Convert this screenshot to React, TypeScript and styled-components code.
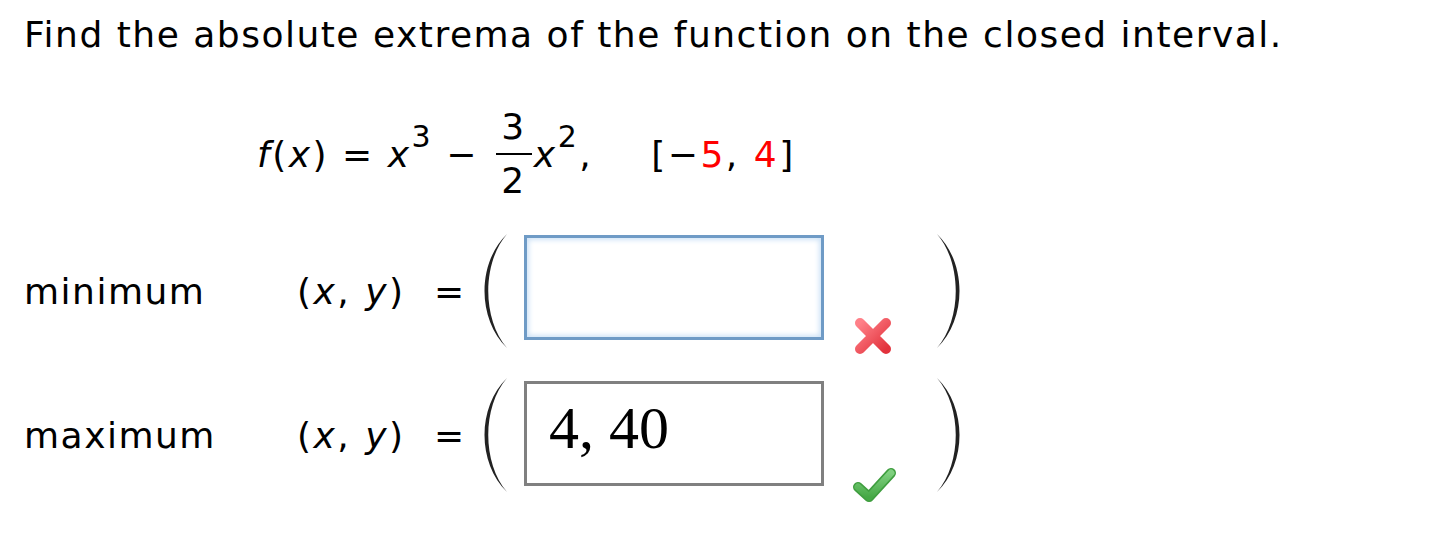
import styled, { createGlobalStyle } from "styled-components";

const GlobalStyle = createGlobalStyle`
  html, body {
    margin: 0;
    padding: 0;
    background: #ffffff;
  }
  body {
    font-family: "DejaVu Sans", Verdana, sans-serif;
    color: #000000;
  }
`;

const Page = styled.div`
  width: 1455px;
  height: 545px;
  padding: 14px 0 0 24px;
  box-sizing: border-box;
  overflow: hidden;
`;

const Title = styled.div`
  font-size: 36px;
  line-height: 42px;
  letter-spacing: 1.5px;
  white-space: nowrap;
`;

const Formula = styled.div`
  display: flex;
  align-items: center;
  margin: 50px 0 0 233px;
  height: 96px;
  font-size: 36px;
  letter-spacing: 2.5px;
  white-space: nowrap;
`;

const Var = styled.i`
  font-style: italic;
`;

const Sup = styled.span`
  font-size: 30px;
  position: relative;
  top: -18px;
`;

const Op = styled.span`
  margin: 0 13px;
`;

const Fraction = styled.span`
  display: inline-flex;
  flex-direction: column;
  align-items: center;
  margin: 0 2px 0 4px;
  line-height: 38px;
`;

const FracBar = styled.span`
  width: 36px;
  height: 2px;
  background: #000;
  margin: 7px 0;
`;

const Interval = styled.span`
  margin-left: 58px;
`;

const Red = styled.span`
  color: #ff0000;
`;

const AnswerRow = styled.div<{ $top: number }>`
  display: flex;
  align-items: center;
  margin-top: ${(p) => p.$top}px;
  height: 116px;
`;

const Label = styled.div`
  width: 273px;
  font-size: 36px;
  letter-spacing: 1.5px;
`;

const Pair = styled.div`
  width: 137px;
  font-size: 36px;
  letter-spacing: 2.5px;
  white-space: nowrap;
`;

const Equals = styled.div`
  width: 50px;
  font-size: 36px;
`;

const Paren = styled.svg`
  width: 25px;
  height: 116px;
  flex: none;
`;

const Field = styled.div<{ $state: "empty" | "filled" }>`
  width: 300px;
  height: 105px;
  box-sizing: border-box;
  margin-left: 15px;
  border: 3px solid ${(p) => (p.$state === "empty" ? "#6f9bc6" : "#808080")};
  box-shadow: ${(p) =>
    p.$state === "empty" ? "inset 0 0 5px 2px #cfe3f7" : "none"};
  display: flex;
  align-items: center;
  padding: 0 0 10px 22px;
  font-family: "Liberation Serif", "Times New Roman", serif;
  font-size: 60px;
  align-self: flex-start;
  margin-top: ${(p) => (p.$state === "empty" ? "2px" : "4px")};
`;

const Mark = styled.div`
  width: 111px;
  height: 116px;
  display: flex;
  align-items: flex-end;
  padding-left: 29px;
  box-sizing: border-box;
`;

const IconBox = styled.div<{ $drop: number }>`
  margin-bottom: -${(p) => p.$drop}px;
  display: flex;
`;

function LeftParen() {
  return (
    <Paren viewBox="0 0 25 116">
      <path d="M23 1 C-7 30,-7 86,23 115 C-2 86,-2 30,23 1 Z" fill="#222" />
    </Paren>
  );
}

function RightParen() {
  return (
    <Paren viewBox="0 0 25 116">
      <path d="M2 1 C32 30,32 86,2 115 C27 86,27 30,2 1 Z" fill="#222" />
    </Paren>
  );
}

function CrossIcon() {
  return (
    <svg width="40" height="40" viewBox="0 0 40 40">
      <defs>
        <linearGradient id="xg" x1="0" y1="0" x2="1" y2="1">
          <stop offset="0" stopColor="#ff8088" />
          <stop offset="1" stopColor="#e2323c" />
        </linearGradient>
      </defs>
      <path
        d="M7 7 L33 33 M33 7 L7 33"
        stroke="url(#xg)"
        strokeWidth="10"
        strokeLinecap="round"
        fill="none"
      />
    </svg>
  );
}

function CheckIcon() {
  return (
    <svg width="44" height="40" viewBox="0 0 44 40">
      <defs>
        <linearGradient id="cg" x1="0" y1="0" x2="0" y2="1">
          <stop offset="0" stopColor="#7fd07f" />
          <stop offset="1" stopColor="#45a845" />
        </linearGradient>
      </defs>
      <path
        d="M5 22 L16 32 L38 8"
        stroke="#3f9e3f"
        strokeWidth="10"
        strokeLinecap="round"
        strokeLinejoin="round"
        fill="none"
      />
      <path
        d="M5 22 L16 32 L38 8"
        stroke="url(#cg)"
        strokeWidth="7"
        strokeLinecap="round"
        strokeLinejoin="round"
        fill="none"
      />
    </svg>
  );
}

export default function App() {
  return (
    <>
      <GlobalStyle />
      <Page>
        <Title>Find the absolute extrema of the function on the closed interval.</Title>
        <Formula>
          <Var>f</Var>(<Var>x</Var>)<Op>=</Op>
          <Var>x</Var>
          <Sup>3</Sup>
          <Op>−</Op>
          <Fraction>
            <span>3</span>
            <FracBar />
            <span>2</span>
          </Fraction>
          <Var>x</Var>
          <Sup>2</Sup>,
          <Interval>
            [−<Red>5</Red>, <Red>4</Red>]
          </Interval>
        </Formula>
        <AnswerRow $top={31}>
          <Label>minimum</Label>
          <Pair>
            (<Var>x</Var>, <Var>y</Var>)
          </Pair>
          <Equals>=</Equals>
          <LeftParen />
          <Field $state="empty" />
          <Mark>
            <IconBox $drop={7}>
              <CrossIcon />
            </IconBox>
          </Mark>
          <RightParen />
        </AnswerRow>
        <AnswerRow $top={28}>
          <Label>maximum</Label>
          <Pair>
            (<Var>x</Var>, <Var>y</Var>)
          </Pair>
          <Equals>=</Equals>
          <LeftParen />
          <Field $state="filled">4, 40</Field>
          <Mark>
            <IconBox $drop={12}>
              <CheckIcon />
            </IconBox>
          </Mark>
          <RightParen />
        </AnswerRow>
      </Page>
    </>
  );
}
